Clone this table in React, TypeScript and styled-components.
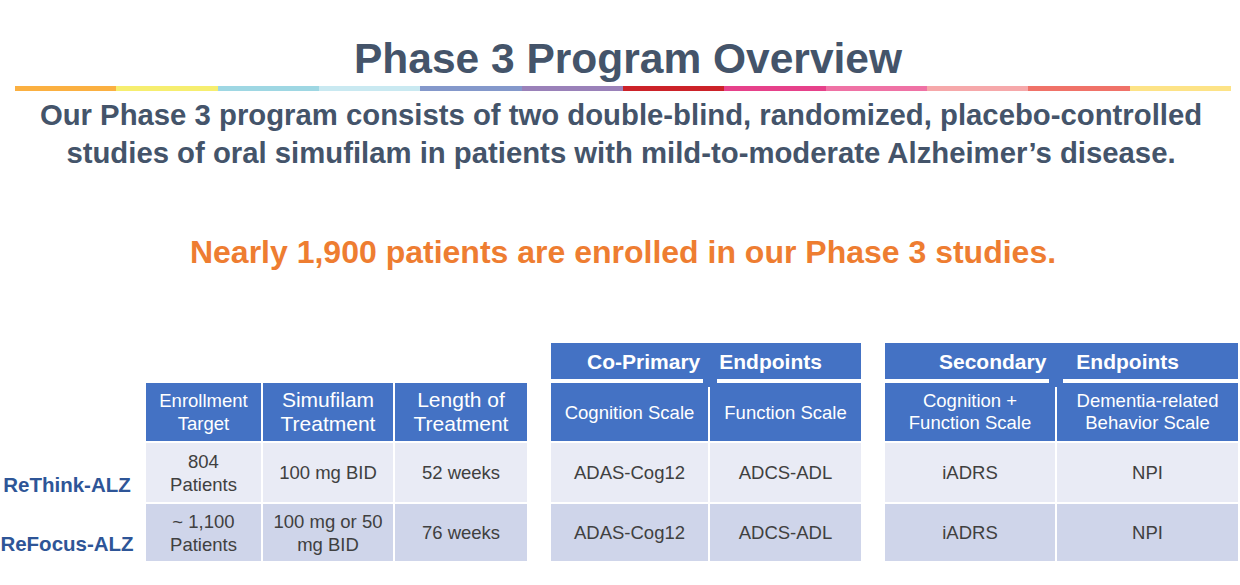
import React from 'react';
import styled, { createGlobalStyle } from 'styled-components';

const GlobalStyle = createGlobalStyle`
  html, body {
    margin: 0;
    padding: 0;
    background: #ffffff;
  }
  body {
    font-family: "Liberation Sans", Arial, sans-serif;
    width: 1240px;
    height: 585px;
    overflow: hidden;
  }
`;

const Slide = styled.div`
  width: 1240px;
  height: 585px;
  display: flex;
  flex-direction: column;
  overflow: hidden;
`;

const Title = styled.h1`
  margin: 35px 0 0;
  padding-left: 16px;
  font-size: 42.5px;
  line-height: 48px;
  font-weight: 700;
  color: #44546a;
  text-align: center;
  white-space: nowrap;
`;

const RainbowBar = styled.div`
  margin: 3px 0 0 15px;
  width: 1216px;
  height: 5px;
  display: flex;
`;

const Stripe = styled.div<{ $c: string }>`
  flex: 1;
  background: ${(p) => p.$c};
`;

const Lead = styled.p`
  margin: 5px 0 0;
  padding-left: 2px;
  font-size: 29.3px;
  line-height: 38px;
  font-weight: 700;
  color: #44546a;
  text-align: center;
  white-space: nowrap;
`;

const Highlight = styled.p`
  margin: 61px 0 0;
  padding-left: 6px;
  font-size: 32px;
  line-height: 38px;
  font-weight: 700;
  color: #ee7d31;
  text-align: center;
  white-space: nowrap;
`;

const TablesRow = styled.div`
  margin-top: 72px;
  display: flex;
  align-items: flex-end;
`;

const StudyLabels = styled.div`
  width: 134px;
  margin-right: 12px;
  display: grid;
  grid-template-rows: 59px 57px;
  row-gap: 2px;
`;

const StudyLabel = styled.div`
  display: flex;
  justify-content: center;
  align-items: flex-end;
  padding-bottom: 5px;
  font-size: 20.5px;
  line-height: 24px;
  font-weight: 700;
  color: #2e5597;
  white-space: nowrap;
`;

const StudyTable = styled.div`
  display: grid;
  grid-template-columns: 115px 130px 132px;
  grid-template-rows: 58px 59px 57px;
  gap: 2px;
  margin-right: 24px;
`;

type Tone = 'head' | 'odd' | 'even';

const toneBg: Record<Tone, string> = {
  head: '#4472c4',
  odd: '#e9ebf5',
  even: '#cfd5ea',
};

const Cell = styled.div<{ $tone: Tone; $size?: number; $lh?: number }>`
  display: flex;
  align-items: center;
  justify-content: center;
  text-align: center;
  background: ${(p) => toneBg[p.$tone]};
  color: ${(p) => (p.$tone === 'head' ? '#ffffff' : '#404040')};
  font-size: ${(p) => p.$size ?? 18.5}px;
  line-height: ${(p) => p.$lh ?? 23}px;
  white-space: nowrap;
`;

const EndpointTable = styled.div<{ $cols: string; $gapAfter?: number }>`
  position: relative;
  display: grid;
  grid-template-columns: ${(p) => p.$cols};
  grid-template-rows: 38px 58px 59px 57px;
  gap: 2px;
  margin-right: ${(p) => p.$gapAfter ?? 0}px;
`;

const SpanHead = styled.div<{ $gap: number; $shift?: number }>`
  grid-column: 1 / -1;
  height: 36px;
  align-self: start;
  background: #4472c4;
  display: flex;
  justify-content: center;
  align-items: center;
  gap: ${(p) => p.$gap}px;
  padding-right: ${(p) => p.$shift ?? 0}px;
  padding-top: 2px;
  box-sizing: border-box;
  color: #ffffff;
  font-weight: 700;
  font-size: 21px;
  line-height: 24px;
  white-space: nowrap;
`;

const Bridge = styled.span<{ $left: number }>`
  position: absolute;
  top: 36px;
  left: ${(p) => p.$left}px;
  width: 14px;
  height: 8px;
  background: #4472c4;
`;

const stripes = [
  '#fbb041',
  '#f6ee6f',
  '#9ed7e3',
  '#c9e9f1',
  '#8498cb',
  '#9a81b9',
  '#cc2229',
  '#e6418a',
  '#ef72a5',
  '#f6a8aa',
  '#f07268',
  '#fde386',
];

export default function App() {
  return (
    <Slide>
      <GlobalStyle />
      <Title>Phase 3 Program Overview</Title>
      <RainbowBar>
        {stripes.map((c) => (
          <Stripe key={c} $c={c} />
        ))}
      </RainbowBar>
      <Lead>
        Our Phase 3 program consists of two double-blind, randomized, placebo-controlled
        <br />
        studies of oral simufilam in patients with mild-to-moderate Alzheimer’s disease.
      </Lead>
      <Highlight>Nearly 1,900 patients are enrolled in our Phase 3 studies.</Highlight>

      <TablesRow>
        <StudyLabels>
          <StudyLabel>ReThink-ALZ</StudyLabel>
          <StudyLabel>ReFocus-ALZ</StudyLabel>
        </StudyLabels>

        <StudyTable>
          <Cell $tone="head" $lh={23.3}>
            Enrollment
            <br />
            Target
          </Cell>
          <Cell $tone="head" $size={21} $lh={24}>
            Simufilam
            <br />
            Treatment
          </Cell>
          <Cell $tone="head" $size={21} $lh={24}>
            Length of
            <br />
            Treatment
          </Cell>

          <Cell $tone="odd">
            804
            <br />
            Patients
          </Cell>
          <Cell $tone="odd">100 mg BID</Cell>
          <Cell $tone="odd">52 weeks</Cell>

          <Cell $tone="even">
            ~ 1,100
            <br />
            Patients
          </Cell>
          <Cell $tone="even">
            100 mg or 50
            <br />
            mg BID
          </Cell>
          <Cell $tone="even">76 weeks</Cell>
        </StudyTable>

        <EndpointTable $cols="157px 151px" $gapAfter={24}>
          <SpanHead $gap={19} $shift={3}>
            <span>Co-Primary</span>
            <span>Endpoints</span>
          </SpanHead>
          <Bridge $left={152} />
          <Cell $tone="head">Cognition Scale</Cell>
          <Cell $tone="head">Function Scale</Cell>
          <Cell $tone="odd">ADAS-Cog12</Cell>
          <Cell $tone="odd">ADCS-ADL</Cell>
          <Cell $tone="even">ADAS-Cog12</Cell>
          <Cell $tone="even">ADCS-ADL</Cell>
        </EndpointTable>

        <EndpointTable $cols="170px 181px">
          <SpanHead $gap={30} $shift={5}>
            <span>Secondary</span>
            <span>Endpoints</span>
          </SpanHead>
          <Bridge $left={164} />
          <Cell $tone="head" $lh={22.5}>
            Cognition +
            <br />
            Function Scale
          </Cell>
          <Cell $tone="head" $lh={22.5}>
            Dementia-related
            <br />
            Behavior Scale
          </Cell>
          <Cell $tone="odd">iADRS</Cell>
          <Cell $tone="odd">NPI</Cell>
          <Cell $tone="even">iADRS</Cell>
          <Cell $tone="even">NPI</Cell>
        </EndpointTable>
      </TablesRow>
    </Slide>
  );
}
